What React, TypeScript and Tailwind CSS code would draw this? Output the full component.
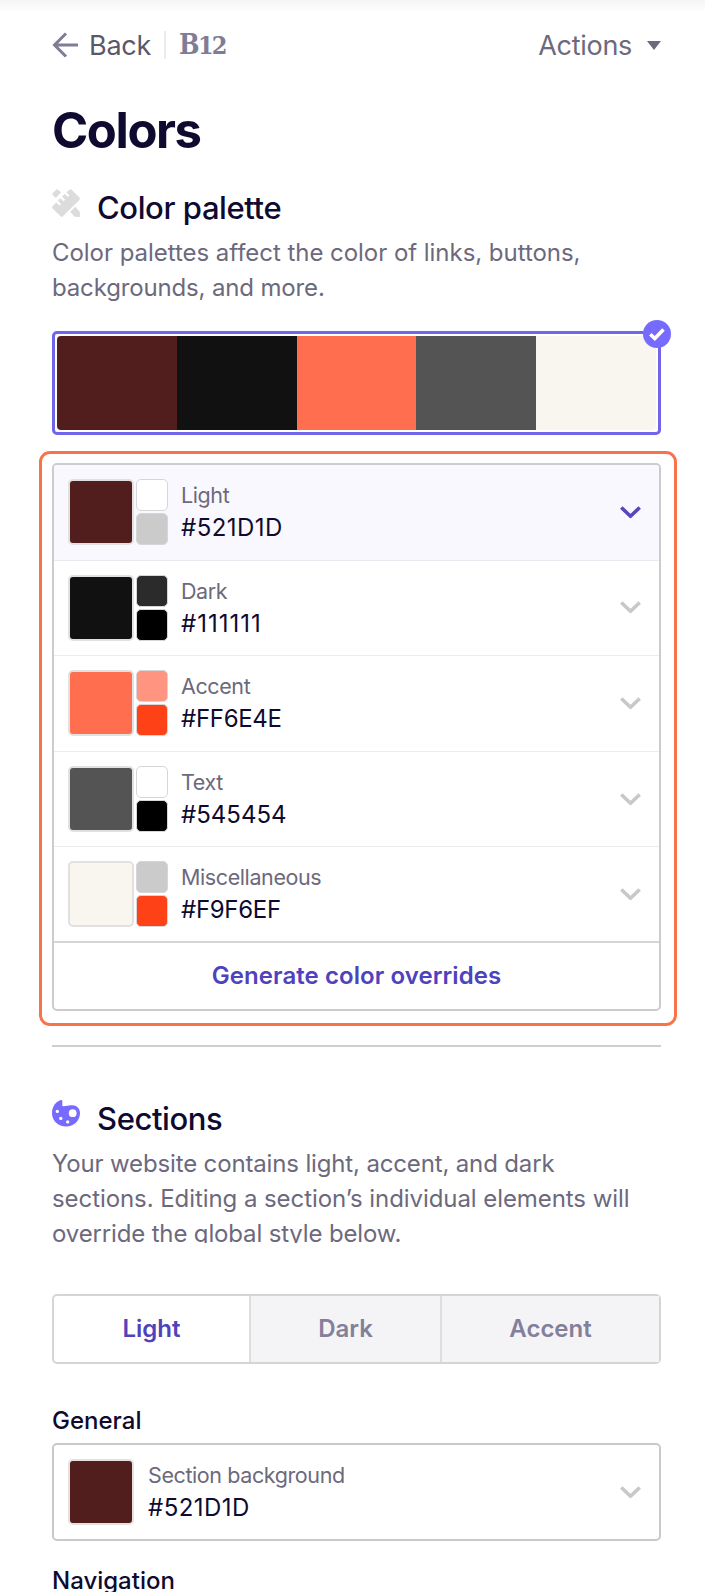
import type { ReactNode } from "react";

interface PaletteColor {
    name: string;
    hex: string;
    main: string;
    light?: string;
    dark?: string;
    spacing?: string;
    active?: boolean;
}

const palette: PaletteColor[] = [
    { name: "Light", hex: "#521D1D", main: "bg-[#521d1d]", light: "bg-white", dark: "bg-[#cbcbcb]", spacing: "tracking-[0.45px]", active: true },
    { name: "Dark", hex: "#111111", main: "bg-[#111111]", light: "bg-[#2b2b2b]", dark: "bg-black", spacing: "tracking-[1px]" },
    { name: "Accent", hex: "#FF6E4E", main: "bg-[#ff6e4e]", light: "bg-[#ff9580]", dark: "bg-[#ff4118]", spacing: "tracking-[-0.3px]" },
    { name: "Text", hex: "#545454", main: "bg-[#545454]", light: "bg-white", dark: "bg-black" },
    { name: "Miscellaneous", hex: "#F9F6EF", main: "bg-[#f9f6ef]", light: "bg-[#cbcbcb]", dark: "bg-[#ff4118]", spacing: "tracking-[-0.3px]" },
];

function App() {
    return (
        <div className="h-[1592px] w-[705px] overflow-hidden bg-white font-['Inter',sans-serif] text-[#0f0a30]">
            <div className="h-3 bg-linear-to-b from-[#f5f5f5] to-white" />
            <main className="ml-[52px] w-[609px]">
                <Header />

                <h1 className="mt-[41px] h-[60px] text-[49px] leading-[60px] font-bold tracking-[-1.4px]">Colors</h1>

                <SectionTitle icon={<DesignIcon />} className="mt-[28px]">Color palette</SectionTitle>
                <p className="mt-[8px] text-[24px] leading-[35px] tracking-[-0.04px] text-[#6c697d]">
                    Color palettes affect the color of links, buttons,<br />
                    <span className="tracking-[-0.15px]">backgrounds, and more.</span>
                </p>

                <PaletteStrip />

                {/* Highlighted overrides panel */}
                <div className="mt-[16px] -ml-[13px] h-[575px] w-[638px] rounded-[11px] border-[3px] border-[#f8734a] py-[9px] pr-[13px] pl-[10px]">
                    <div className="overflow-hidden rounded-[5px] border-2 border-[#cccccf]">
                        {palette.map((color) => (
                            <ColorRow key={color.name} color={color} />
                        ))}
                        <button className="block h-[66px] w-full text-center text-[24px] font-semibold tracking-[0.07px] text-[#4f42bd]">
                            Generate color overrides
                        </button>
                    </div>
                </div>

                <hr className="mt-[19px] border-t-2 border-[#cfcfd1]" />

                <SectionTitle icon={<PaletteIcon />} className="mt-[53px]">Sections</SectionTitle>
                <p className="mt-[8px] h-[97px] overflow-hidden text-[24px] leading-[35px] tracking-[-0.15px] text-[#6c697d]">
                    Your website contains light, accent, and dark<br />
                    <span className="tracking-[-0.07px]">sections. Editing a section’s individual elements will</span><br />
                    override the global style below.
                </p>

                <div className="mt-[51px] flex h-[70px] rounded-[5px] border-2 border-[#d5d5d8] text-[24px] font-semibold">
                    <button className="w-[195px] text-[#4f42bd]">Light</button>
                    <button className="w-[191px] border-l-2 border-[#dedee1] bg-[#f4f4f7] text-[#83809a]">Dark</button>
                    <button className="flex-1 border-l-2 border-[#dedee1] bg-[#f4f4f7] text-[#83809a]">Accent</button>
                </div>

                <h3 className="mt-[42px] text-[24px] leading-[30px] font-medium">General</h3>
                <div className="mt-[7px] flex h-[98px] items-center rounded-[5px] border-2 border-[#c9c9cb] pr-[18px] pl-[14px]">
                    <div className="size-[66px] rounded-[5px] border-2 border-[#e6e0e0] bg-[#521d1d]" />
                    <ColorText name="Section background" hex="#521D1D" spacing="tracking-[0.45px]" className="ml-[14px]" />
                    <Chevron className="text-[#c8c8c8]" />
                </div>
                <h3 className="mt-[25px] text-[24px] leading-[30px] font-medium">Navigation</h3>
            </main>
        </div>
    );
}

export default App

function Header() {
    return (
        <header className="mt-[18px] flex h-[30px] items-center">
            <svg className="h-[26px] w-[27px] text-[#7f7c96]" viewBox="0 0 27 26" fill="none" stroke="currentColor" strokeWidth="3">
                <path d="M14 1.5 2.5 13 14 24.5M3 13h23" />
            </svg>
            <span className="ml-[10px] pt-px text-[27px] leading-[30px] tracking-[-0.25px] text-[#5b586a]">Back</span>
            <span className="ml-[13px] h-[28px] w-[2px] bg-[#ececf0]" />
            <span className="ml-[13px] font-['DejaVu_Serif_Condensed','DejaVu_Serif',serif] text-[27px] leading-[30px] font-bold tracking-[-1.7px] text-[#7f7c96]">
                B<span className="text-[25px]">12</span>
            </span>
            <span className="ml-auto pt-px text-[27px] leading-[30px] tracking-[-0.3px] text-[#6c697d]">Actions</span>
            <svg className="ml-[15px] h-[9px] w-[14px] text-[#6c697d]" viewBox="0 0 14 9" fill="currentColor">
                <path d="M0 0h14L7 9z" />
            </svg>
        </header>
    );
}

interface SectionTitleProps {
    icon: ReactNode;
    className: string;
    children: ReactNode;
}

function SectionTitle({ icon, className, children }: SectionTitleProps) {
    return (
        <div className={`flex h-[38px] items-start ${className}`}>
            {icon}
            <h2 className="ml-[17px] text-[31px] leading-[38px] font-medium tracking-[-0.4px]">{children}</h2>
        </div>
    );
}

function PaletteStrip() {
    return (
        <div className="relative mt-[26px] h-[104px] rounded-[5px] border-[3px] border-[#7165ea] p-[2px]">
            <div className="flex h-full overflow-hidden rounded-[4px]">
                {palette.map((color) => (
                    <div key={color.name} className={`flex-1 ${color.main}`} />
                ))}
            </div>
            <span className="absolute -top-[14px] -right-[13px] flex size-[28px] items-center justify-center rounded-full bg-[#766aff]">
                <svg className="h-[13px] w-[16px]" viewBox="0 0 16 13" fill="none" stroke="white" strokeWidth="3.6">
                    <path d="m1.3 6.3 4.5 4.2L14.5 1.5" />
                </svg>
            </span>
        </div>
    );
}

function ColorRow({ color }: { color: PaletteColor }) {
    return (
        <div className={`flex h-[95.6px] items-center border-b pr-[18px] pl-[14px] last-of-type:border-b-2 last-of-type:border-[#d5d5d8] ${color.active ? "border-[#e9e9ef] bg-[#f9f8fe]" : "border-[#ececee]"}`}>
            <div className={`size-[66px] rounded-[5px] border-2 border-[#e2e0e0] ${color.main}`} />
            <div className="ml-[2px] flex flex-col gap-[2px]">
                <div className={`size-[32px] rounded-[5px] border border-[#d6d6d8] ${color.light}`} />
                <div className={`size-[32px] rounded-[5px] border border-[#d6d6d8] ${color.dark}`} />
            </div>
            <ColorText name={color.name} hex={color.hex} spacing={color.spacing} className="ml-[13px]" />
            <Chevron className={color.active ? "text-[#5b45bb]" : "text-[#c8c8c8]"} />
        </div>
    );
}

interface ColorTextProps {
    name: string;
    hex: string;
    spacing?: string;
    className: string;
}

function ColorText({ name, hex, spacing = "", className }: ColorTextProps) {
    return (
        <div className={className}>
            <p className="text-[21.5px] leading-[32px] tracking-[-0.4px] text-[#6c697d]">{name}</p>
            <p className={`text-[24px] leading-[34px] ${spacing}`}>{hex}</p>
        </div>
    );
}

function Chevron({ className }: { className: string }) {
    return (
        <svg className={`ml-auto h-[13px] w-[21px] ${className}`} viewBox="0 0 21 13" fill="none" stroke="currentColor" strokeWidth="3.6" strokeLinejoin="round">
            <path d="m1.3 1.5 9.2 8.8 9.2-8.8" />
        </svg>
    );
}

// Ruler laid over a pencil
function DesignIcon() {
    return (
        <svg className="size-[28px] text-[#dcdcdc]" viewBox="0 0 28 28" fill="currentColor">
            <path d="M.5 17.2 4.2 13.4l3.2 3.1 1.6-1.6-3.2-3.1 2.6-2.6 3.2 3.1 1.6-1.6-3.2-3.1L12.7 5l3.2 3.1 1.6-1.6-3-3L17.3.8q1.2-1 2.4 0l7.7 7.7q1.1 1.2 0 2.4L10.9 27.3q-1.2 1.1-2.4 0L.6 19.5q-1-1.1-.1-2.3z" />
            <path d="M.7 4.2 4.1.7q1-.9 2 0L9 3.5 3.7 9 .7 6.1q-.8-.9 0-1.9z" />
            <path d="m18.2 22.8 5.1-5.1 3.8 4.2q.6.8.7 1.8l.2 3.2q0 1.1-1.1 1.1l-3.3-.2q-1-.1-1.7-.9z" />
        </svg>
    );
}

function PaletteIcon() {
    return (
        <svg className="size-[28px] text-[#766aff]" viewBox="0 0 28 28" fill="currentColor" fillRule="evenodd">
            <path d="M10.3.7v4.5q0 1.2 1.2 1L19 5.2c5.2-.6 9 2.9 9 7.7C28 20.5 21.8 26.5 14 26.5S0 20.5 0 13.2C0 6.8 4 1.3 9 .1q1.3-.3 1.3.6zM20.7 9.3a3.9 3.9 0 1 0 0 7.8 3.9 3.9 0 0 0 0-7.8zM5.3 9.7a1.7 1.7 0 1 0 0 3.4 1.7 1.7 0 0 0 0-3.4zM8.8 16.7a1.7 1.7 0 1 0 0 3.4 1.7 1.7 0 0 0 0-3.4zM15.7 20.2a1.7 1.7 0 1 0 0 3.4 1.7 1.7 0 0 0 0-3.4z" />
        </svg>
    );
}
